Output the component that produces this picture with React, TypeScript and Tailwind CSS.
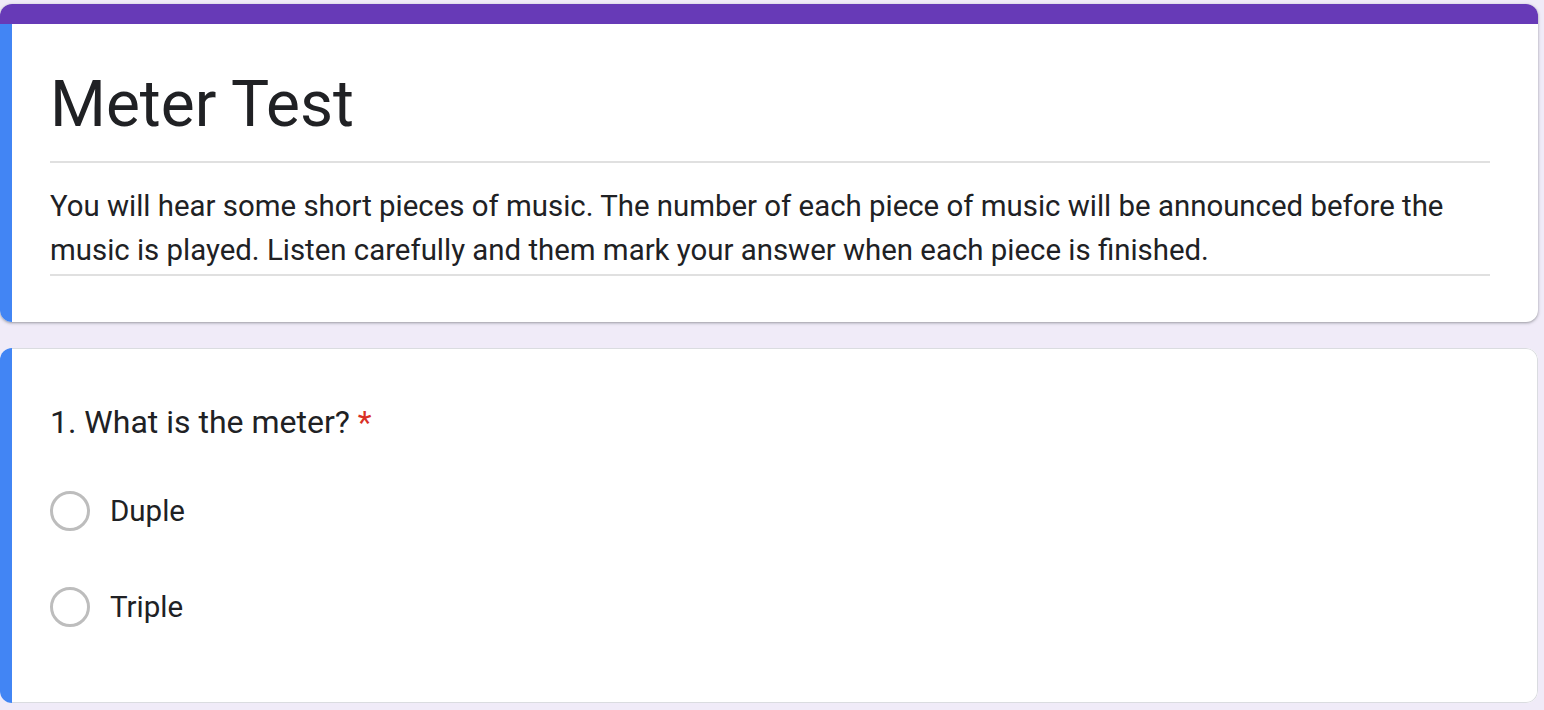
import React from "react";

function Radio({ label }: { label: string }) {
  return (
    <div className="flex items-center h-[40px] gap-[20px]">
      <div className="w-[40px] h-[40px] rounded-full border-[3px] border-[#bdbdbd] shrink-0" />
      <span className="text-[29.5px] leading-[40px] text-[#202124]">{label}</span>
    </div>
  );
}

export default function App() {
  return (
    <div
      className="min-h-screen bg-[#f0ebf8] pt-[4px] pr-[6px]"
      style={{ fontFamily: "Roboto, 'Noto Sans', Arial, sans-serif" }}
    >
      <div className="rounded-[12px] overflow-hidden bg-white shadow-[0_1px_2px_0_rgba(60,64,67,0.3),0_1px_3px_1px_rgba(60,64,67,0.15)]">
        <div className="h-[20px] bg-[#673ab7]" />
        <div className="flex">
          <div className="w-[12px] shrink-0 bg-[#4285f4]" />
          <div className="flex-1 pl-[38px] pr-[48px] pt-[43px] pb-[46px]">
            <h1 className="text-[64px] leading-[76px] text-[#202124] font-normal">Meter Test</h1>
            <div className="h-[2px] bg-[#e0e0e0] mt-[18px]" />
            <p className="mt-[21px] text-[29.4px] leading-[44px] text-[#202124]">
              You will hear some short pieces of music. The number of each piece of music will be announced before the music is played. Listen carefully and them mark your answer when each piece is finished.
            </p>
            <div className="h-[2px] bg-[#e0e0e0] mt-[2px]" />
          </div>
        </div>
      </div>

      <div className="mt-[26px] rounded-[12px] overflow-hidden flex bg-white">
        <div className="w-[12px] shrink-0 bg-[#4285f4]" />
        <div className="flex-1 border border-l-0 border-[#dadce0] rounded-r-[12px] pl-[38px] pr-[48px] pt-[53px] pb-[75px]">
          <div className="text-[32px] leading-[40px] text-[#202124]">
            1. What is the meter? <span className="text-[#d93025]">*</span>
          </div>
          <div className="mt-[49px] flex flex-col gap-[56px]">
            <Radio label="Duple" />
            <Radio label="Triple" />
          </div>
        </div>
      </div>
    </div>
  );
}
